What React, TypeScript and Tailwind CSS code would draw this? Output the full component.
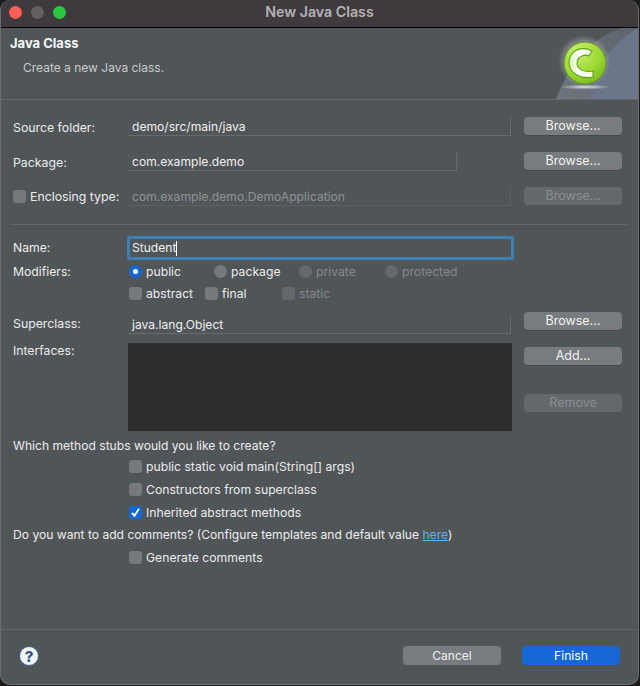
import type { ReactNode } from 'react';

function Browse({ label = 'Browse...', disabled = false }: { label?: string; disabled?: boolean }) {
  return (
    <div
      className={`flex h-[18px] w-[98px] items-center justify-center rounded-[4px] text-[12.5px] leading-none ${
        disabled
          ? 'bg-[#63686a] text-[#8b8f91]'
          : 'bg-[#787c7e] text-[#f2f2f2] shadow-[0_1px_0_#43474a]'
      }`}
    >
      {label}
    </div>
  );
}

function Check({ on = false, disabled = false }: { on?: boolean; disabled?: boolean }) {
  return (
    <span
      className={`flex h-[13px] w-[13px] shrink-0 items-center justify-center rounded-[3px] ${
        on ? 'bg-[#1766d6]' : disabled ? 'bg-[#63686a]' : 'bg-[#75797b]'
      }`}
    >
      {on && (
        <svg width="11" height="11" viewBox="0 0 11 11" fill="none">
          <path d="M2 5.8 L4.5 8.8 L9 1.8" stroke="#fff" strokeWidth="1.8" />
        </svg>
      )}
    </span>
  );
}

function Radio({ on = false, disabled = false }: { on?: boolean; disabled?: boolean }) {
  return (
    <span
      className={`flex h-[13px] w-[13px] shrink-0 items-center justify-center rounded-full ${
        on ? 'bg-[#1766d6]' : disabled ? 'bg-[#63686a]' : 'bg-[#75797b]'
      }`}
    >
      {on && <span className="h-[5px] w-[5px] rounded-full bg-white" />}
    </span>
  );
}

function Field({ value, width = 'w-[383px]', disabled = false }: { value: string; width?: string; disabled?: boolean }) {
  return (
    <div
      className={`flex h-[19px] items-center border-r border-b pl-[4px] pt-[3px] text-[12.1px] leading-none ${width} ${
        disabled ? 'border-[#5d6164] text-[#8f9395]' : 'border-[#676b6d] text-[#f0f0f0]'
      }`}
    >
      {value}
    </div>
  );
}

function Row({
  label,
  field,
  button,
  className = '',
  labelPad = 'pt-[3px]',
}: {
  label: ReactNode;
  field: ReactNode;
  button?: ReactNode;
  className?: string;
  labelPad?: string;
}) {
  return (
    <div className={`flex items-start ${className}`}>
      <div className={`w-[115px] text-[12.3px] leading-[15px] text-[#ececec] ${labelPad}`}>{label}</div>
      <div className="w-[396px]">{field}</div>
      {button}
    </div>
  );
}

function Option({ children, on, disabled, radio, className = '' }: { children: ReactNode; on?: boolean; disabled?: boolean; radio?: boolean; className?: string }) {
  return (
    <div className={`flex items-center gap-[4px] text-[12.2px] leading-[15px] ${disabled ? 'text-[#85898b]' : 'text-[#ececec]'} ${className}`}>
      {radio ? <Radio on={on} disabled={disabled} /> : <Check on={on} disabled={disabled} />}
      <span>{children}</span>
    </div>
  );
}

function ClassIcon() {
  return (
    <svg width="60" height="58" viewBox="0 0 60 58" className="absolute left-[554px] top-[8px]">
      <defs>
        <radialGradient id="ball" cx="0.35" cy="0.25" r="0.85">
          <stop offset="0" stopColor="#cdef70" />
          <stop offset="0.6" stopColor="#9bd832" />
          <stop offset="1" stopColor="#74b81c" />
        </radialGradient>
        <radialGradient id="glow" cx="0.5" cy="0.5" r="0.5">
          <stop offset="0" stopColor="#ffffff" stopOpacity="0.8" />
          <stop offset="1" stopColor="#ffffff" stopOpacity="0" />
        </radialGradient>
        <radialGradient id="halo" cx="0.5" cy="0.5" r="0.5">
          <stop offset="0.72" stopColor="#ffffff" stopOpacity="0.3" />
          <stop offset="1" stopColor="#ffffff" stopOpacity="0" />
        </radialGradient>
        <linearGradient id="letter" x1="0" y1="0" x2="1" y2="0">
          <stop offset="0" stopColor="#d8f2a8" />
          <stop offset="0.4" stopColor="#ffffff" />
          <stop offset="1" stopColor="#f2fae0" />
        </linearGradient>
      </defs>
      <ellipse cx="30" cy="51" rx="26" ry="2.5" fill="url(#glow)" />
      <circle cx="29" cy="25" r="26" fill="url(#halo)" />
      <circle cx="30" cy="27" r="21" fill="url(#ball)" stroke="#628f20" strokeWidth="1" />
      <path
        d="M37 15 C30 11 20 12 16 19 C12 26 14 35 22 39 C27 42 33 42 38 41 L38 35 C32 36 26 35 23 31 C21 27 22 22 27 20 C29 19 32 19 34 20 Z"
        fill="url(#letter)"
        stroke="#5aa316"
        strokeWidth="1.1"
      />
    </svg>
  );
}

export default function App() {
  return (
    <div className="h-[686px] w-[640px] overflow-hidden bg-[#1d1c1d] font-['Inter','Liberation_Sans',sans-serif]">
      <div className="flex h-[685px] w-[639px] flex-col overflow-hidden rounded-b-[10px] rounded-t-[10px] border border-t-0 border-[#6a6e70] bg-[#505558]">
        {/* title bar */}
        <div className="relative flex h-[28px] shrink-0 items-center justify-center border-b border-black bg-[#3f3a3d] pb-[4px] text-[14.2px] font-semibold text-[#b5b2b4]">
          <span className="absolute left-[8px] top-[6px] h-[13px] w-[13px] rounded-full bg-[#fb5f57]" />
          <span className="absolute left-[30px] top-[6px] h-[13px] w-[13px] rounded-full bg-[#635f63]" />
          <span className="absolute left-[52px] top-[6px] h-[13px] w-[13px] rounded-full bg-[#28c840]" />
          New Java Class
        </div>

        {/* header */}
        <div className="relative h-[72px] shrink-0 border-b border-[#62676a] pl-[9px] pt-[7px]">
          <svg width="82" height="71" viewBox="0 0 82 71" className="absolute right-0 top-0">
            <defs>
              <linearGradient id="band" x1="0" y1="1" x2="1" y2="0">
                <stop offset="0" stopColor="#6e747c" />
                <stop offset="1" stopColor="#5e646c" />
              </linearGradient>
            </defs>
            <path d="M0 71 C10 45 25 25 42 12 C52 5 62 0 70 0 L82 0 L82 71 Z" fill="url(#band)" />
            <path d="M34 71 C36 45 55 15 82 0 L82 71 Z" fill="#6c768a" />
          </svg>
          <ClassIcon />
          <div className="text-[13px] font-bold leading-[16px] text-[#f5f5f5]">Java Class</div>
          <div className="mt-[9px] pl-[13px] text-[12px] leading-[15px] text-[#c9cbcc]">Create a new Java class.</div>
        </div>

        {/* form */}
        <div className="flex flex-1 flex-col pl-[12px] pt-[17px]">
          <Row label="Source folder:" field={<Field value="demo/src/main/java" />} button={<Browse />} />
          <Row className="mt-[16px]" label="Package:" field={<Field value="com.example.demo" width="w-[329px]" />} button={<Browse />} />
          <Row
            className="mt-[16px]"
            label={
              <span className="-mt-[1px] flex items-center gap-[4px]">
                <Check />
                Enclosing type:
              </span>
            }
            field={<Field value="com.example.demo.DemoApplication" disabled />}
            button={<Browse disabled />}
          />

          <div className="ml-[-2px] mr-[11px] mt-[18px] h-px bg-[#62676a]" />

          <div className="mt-[11px] flex items-center">
            <div className="w-[114px] pb-[2px] text-[12.2px] leading-[15px] text-[#ececec]">Name:</div>
            <div className="flex h-[24px] w-[387px] items-center rounded-[2px] border-[3px] border-[#3f7fb0] pl-[2px] text-[12.1px] leading-none text-[#f0f0f0]">
              Student
              <span className="h-[15px] w-px bg-white" />
            </div>
          </div>

          <div className="flex h-[22px] items-center">
            <div className="w-[116px] text-[12.2px] leading-[15px] text-[#ececec]">Modifiers:</div>
            <Option radio on className="w-[85px]">public</Option>
            <Option radio className="w-[85px]">package</Option>
            <Option radio disabled className="w-[86px]">private</Option>
            <Option radio disabled>protected</Option>
          </div>
          <div className="flex h-[23px] items-center pl-[116px]">
            <Option className="w-[76px]">abstract</Option>
            <Option className="w-[77px]">final</Option>
            <Option disabled>static</Option>
          </div>

          <Row
            className="mt-[10px]"
            labelPad="pt-[1px]"
            label="Superclass:"
            field={<Field value="java.lang.Object" />}
            button={
              <div className="-mt-[3px]">
                <Browse />
              </div>
            }
          />

          <div className="mt-[9px] flex items-start">
            <div className="w-[115px] text-[12.2px] leading-[15px] text-[#ececec]">Interfaces:</div>
            <div className="h-[88px] w-[384px] bg-[#2e2e2e]" />
            <div className="ml-[12px] flex flex-col gap-[29px] pt-[4px]">
              <Browse label="Add..." />
              <Browse label="Remove" disabled />
            </div>
          </div>

          <div className="mt-[7px] text-[12.1px] leading-[15px] text-[#ececec]">Which method stubs would you like to create?</div>
          <div className="mt-[6px] flex flex-col gap-[8px] pl-[116px]">
            <Option>public static void main(String[] args)</Option>
            <Option>Constructors from superclass</Option>
            <Option on>Inherited abstract methods</Option>
          </div>
          <div className="mt-[7px] text-[12.1px] leading-[15px] text-[#ececec]">
            Do you want to add comments? (Configure templates and default value <span className="text-[#5cb0ee] underline">here</span>)
          </div>
          <div className="mt-[8px] pl-[116px]">
            <Option>Generate comments</Option>
          </div>
        </div>

        {/* footer */}
        <div className="flex h-[55px] shrink-0 items-start border-t border-[#62676a] pl-[18px] pr-[18px]">
          <div className="mt-[16px] flex h-[20px] w-[20px] items-center justify-center rounded-full border border-[#3f5f93] bg-[#f4f4f4] text-[15px] font-extrabold leading-none text-[#34548c]">
            ?
          </div>
          <div className="ml-auto mt-[16px] flex gap-[21px]">
            <div className="flex h-[19px] w-[98px] items-center justify-center rounded-[4px] bg-[#787c7e] text-[12px] text-[#f2f2f2]">Cancel</div>
            <div className="flex h-[19px] w-[98px] items-center justify-center rounded-[4px] bg-[#1668d6] pt-[1px] text-[12.2px] text-white">Finish</div>
          </div>
        </div>
      </div>
    </div>
  );
}
